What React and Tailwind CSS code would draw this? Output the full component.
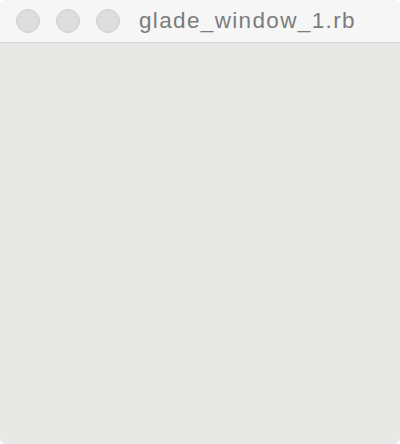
export default function App() {
  return (
    <div className="h-[444px] w-[400px] bg-white">
      <div className="flex h-full flex-col overflow-hidden rounded-[6px] bg-[#e8e8e7]">
        <header className="flex h-[43px] items-center border-b border-[#d3d3d3] bg-[#f6f6f6] pl-4">
          <div className="flex gap-4">
            <span className="h-6 w-6 rounded-full border border-[#d0d0d0] bg-[#dddddd]" />
            <span className="h-6 w-6 rounded-full border border-[#d0d0d0] bg-[#dddddd]" />
            <span className="h-6 w-6 rounded-full border border-[#d0d0d0] bg-[#dddddd]" />
          </div>
          <h1 className="ml-[19px] font-['Liberation_Sans',Arial,sans-serif] text-[22.5px] leading-none tracking-[1.35px] text-[#7c7c7c]">
            glade_window_1.rb
          </h1>
        </header>
        <main className="flex-1" />
      </div>
    </div>
  );
}
